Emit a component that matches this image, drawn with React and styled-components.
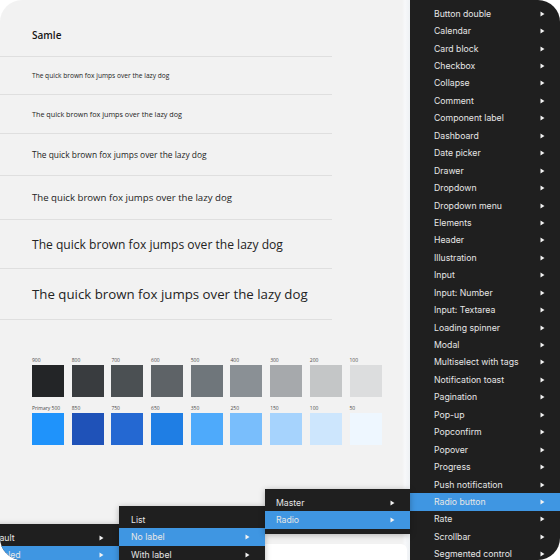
import React from 'react';
import styled, { createGlobalStyle } from 'styled-components';

const Global = createGlobalStyle`
  html, body { margin: 0; padding: 0; background: #ffffff; }
  #root { width: 560px; height: 560px; }
`;

const Frame = styled.div`
  position: relative;
  width: 560px;
  height: 560px;
  border-radius: 22px;
  overflow: hidden;
  display: grid;
  grid-template-columns: 410px 150px;
`;

const Canvas = styled.div`
  background: linear-gradient(to right, #f2f2f2 calc(100% - 8px), #f7f8fa calc(100% - 5px), #eef1f4);
  display: flex;
  flex-direction: column;
  font-family: "Open Sans", sans-serif;
`;

const Header = styled.div`
  width: 332px;
  height: 57px;
  box-sizing: border-box;
  padding: 13px 0 0 32px;
  display: flex;
  align-items: center;
  border-bottom: 1px solid #dfdfdf;
  font-size: 10px;
  font-weight: 600;
  color: #141414;
`;

const SampleRow = styled.div`
  width: 332px;
  height: ${p => p.$h}px;
  box-sizing: border-box;
  padding-left: 32px;
  display: flex;
  align-items: center;
  border-bottom: 1px solid #dfdfdf;
  font-size: ${p => p.$size}px;
  color: #232323;
  white-space: nowrap;
`;

const Palette = styled.div`
  margin: 38px 0 0 32px;
  display: grid;
  grid-template-columns: repeat(9, 32px);
  column-gap: 7.7px;
  row-gap: 9px;
`;

const Swatch = styled.div`
  display: flex;
  flex-direction: column;
  gap: 2px;
`;

const SwatchLabel = styled.span`
  font-size: 5px;
  line-height: 5px;
  color: #4a4a4a;
  white-space: nowrap;
`;

const Chip = styled.div`
  width: 32px;
  height: 32px;
  background: ${p => p.$c};
`;

const WhiteCard = styled.div`
  margin: 99px 3px 0 32px;
  height: 40px;
  background: #ffffff;
  border-radius: 6px;
`;

const MainMenu = styled.div`
  background: #1f1f1f;
  padding-top: 5px;
  display: flex;
  flex-direction: column;
  font-family: Inter, "Noto Sans", sans-serif;
`;

const Item = styled.div`
  height: 17.45px;
  flex: none;
  box-sizing: border-box;
  padding: 0 15.5px 0 ${p => p.$pad}px;
  display: flex;
  align-items: center;
  justify-content: space-between;
  font-size: 8.7px;
  color: #e6e6e6;
  white-space: nowrap;
  background: ${p => (p.$active ? '#3f96e2' : 'transparent')};
`;

const SubMenu = styled.div`
  position: absolute;
  left: ${p => p.$x}px;
  top: ${p => p.$y}px;
  width: ${p => p.$w}px;
  padding: 5px 0;
  box-sizing: border-box;
  background: #1f1f1f;
  display: flex;
  flex-direction: column;
  font-family: Inter, "Noto Sans", sans-serif;
  box-shadow: 0 1px 6px rgba(0, 0, 0, 0.28);
`;

const Arrow = () => (
  <svg width="5" height="6" viewBox="0 0 5 6">
    <polygon points="0.5,0.5 4.5,3 0.5,5.5" fill="#f2f2f2" />
  </svg>
);

const samples = [
  { h: 38, size: 6.62 },
  { h: 39, size: 7.22 },
  { h: 42, size: 8.42 },
  { h: 44, size: 9.65 },
  { h: 49, size: 12.08 },
  { h: 51, size: 13.28 },
];

const grays = [
  ['900', '#232527'], ['800', '#393c3f'], ['700', '#4b5053'], ['600', '#5e6367'],
  ['500', '#6f767b'], ['400', '#8a9095'], ['300', '#a6a9ac'], ['200', '#c4c6c7'], ['100', '#dcddde'],
];
const blues = [
  ['Primary 500', '#1f93fb'], ['850', '#1f52b8'], ['750', '#2468d2'], ['650', '#1f7ee4'],
  ['350', '#4eaafb'], ['250', '#79befc'], ['150', '#a6d3fd'], ['100', '#cde6fd'], ['50', '#eef7ff'],
];

const mainItems = [
  'Button double', 'Calendar', 'Card block', 'Checkbox', 'Collapse', 'Comment',
  'Component label', 'Dashboard', 'Date picker', 'Drawer', 'Dropdown', 'Dropdown menu',
  'Elements', 'Header', 'Illustration', 'Input', 'Input: Number', 'Input: Textarea',
  'Loading spinner', 'Modal', 'Multiselect with tags', 'Notification toast', 'Pagination',
  'Pop-up', 'Popconfirm', 'Popover', 'Progress', 'Push notification', 'Radio button',
  'Rate', 'Scrollbar', 'Segmented control',
];

const text = 'The quick brown fox jumps over the lazy dog';

export default function App() {
  return (
    <>
      <Global />
      <Frame>
        <Canvas>
          <Header>Samle</Header>
          {samples.map((s, i) => (
            <SampleRow key={i} $h={s.h} $size={s.size}>{text}</SampleRow>
          ))}
          <Palette>
            {[...grays, ...blues].map(([label, c]) => (
              <Swatch key={label + c}>
                <SwatchLabel>{label}</SwatchLabel>
                <Chip $c={c} />
              </Swatch>
            ))}
          </Palette>
          <WhiteCard />
        </Canvas>
        <MainMenu>
          {mainItems.map(name => (
            <Item key={name} $pad={24} $active={name === 'Radio button'}>
              <span>{name}</span>
              <Arrow />
            </Item>
          ))}
        </MainMenu>
        <SubMenu $x={-27} $y={524} $w={146}>
          <Item $pad={12}><span>Default</span><Arrow /></Item>
          <Item $pad={12} $active><span>Disabled</span><Arrow /></Item>
        </SubMenu>
        <SubMenu $x={119} $y={506} $w={146}>
          <Item $pad={12}><span>List</span></Item>
          <Item $pad={12} $active><span>No label</span><Arrow /></Item>
          <Item $pad={12}><span>With label</span><Arrow /></Item>
        </SubMenu>
        <SubMenu $x={265} $y={489} $w={145}>
          <Item $pad={11}><span>Master</span><Arrow /></Item>
          <Item $pad={11} $active><span>Radio</span><Arrow /></Item>
        </SubMenu>
      </Frame>
    </>
  );
}
